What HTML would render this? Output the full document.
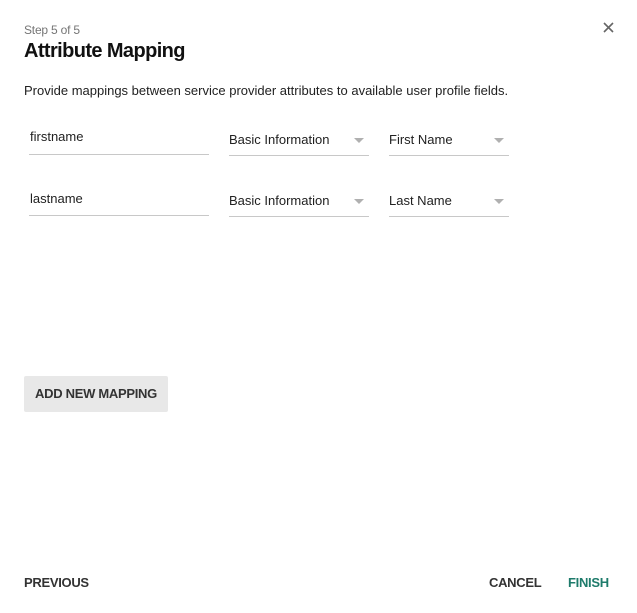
<!DOCTYPE html>
<html><head><style>
body{margin:0;width:637px;height:613px;background:#fff;font-family:"Liberation Sans",Arial,sans-serif;position:relative;overflow:hidden;color:#212121}
.a{position:absolute;white-space:nowrap}
.u{position:absolute;height:1px;background:#c8c8c8}
.tri{position:absolute;width:0;height:0;border-left:5px solid transparent;border-right:5px solid transparent;border-top:5px solid #b0b0b0}
b{font-weight:bold;letter-spacing:-0.3px}
</style></head><body>
<div class="a" style="left:24px;top:23px;font-size:12px;color:#757575;letter-spacing:-0.2px">Step 5 of 5</div>
<div class="a" style="left:24px;top:40px;font-size:20px;font-weight:bold;color:#111;letter-spacing:-0.6px">Attribute Mapping</div>
<svg class="a" style="left:603px;top:22px" width="11" height="11" viewBox="0 0 11 11"><path d="M1 1L10 10M10 1L1 10" stroke="#666" stroke-width="1.6"/></svg>
<div class="a" style="left:24px;top:83px;font-size:13px">Provide mappings between service provider attributes to available user profile fields.</div>

<div class="a" style="left:30px;top:129px;font-size:13px">firstname</div>
<div class="u" style="left:29px;top:154px;width:180px"></div>
<div class="a" style="left:229px;top:132px;font-size:13px">Basic Information</div>
<div class="tri" style="left:354px;top:138px"></div>
<div class="u" style="left:229px;top:155px;width:140px"></div>
<div class="a" style="left:389px;top:132px;font-size:13px">First Name</div>
<div class="tri" style="left:494px;top:138px"></div>
<div class="u" style="left:389px;top:155px;width:120px"></div>

<div class="a" style="left:30px;top:191px;font-size:13px">lastname</div>
<div class="u" style="left:29px;top:215px;width:180px"></div>
<div class="a" style="left:229px;top:193px;font-size:13px">Basic Information</div>
<div class="tri" style="left:354px;top:199px"></div>
<div class="u" style="left:229px;top:216px;width:140px"></div>
<div class="a" style="left:389px;top:193px;font-size:13px">Last Name</div>
<div class="tri" style="left:494px;top:199px"></div>
<div class="u" style="left:389px;top:216px;width:120px"></div>

<div class="a" style="left:24px;top:376px;width:144px;height:36px;background:#e8e8e8;border-radius:2px;font-size:13px;color:#333;line-height:36px;text-align:center"><b>ADD NEW MAPPING</b></div>

<div class="a" style="left:24px;top:575px;font-size:13px;color:#333"><b>PREVIOUS</b></div>
<div class="a" style="left:489px;top:575px;font-size:13px;color:#333"><b>CANCEL</b></div>
<div class="a" style="left:568px;top:575px;font-size:13px;color:#1e7b6b"><b>FINISH</b></div>
</body></html>
